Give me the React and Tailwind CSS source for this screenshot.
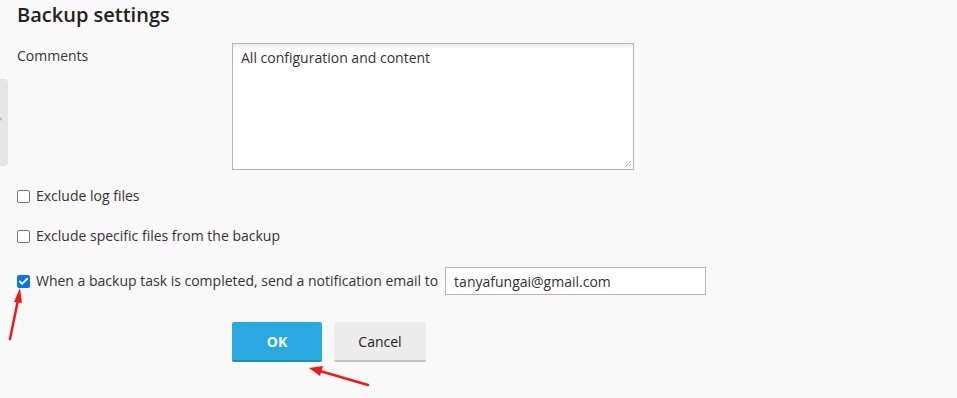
import { Check } from 'lucide-react';

function Box({ checked }) {
    if (checked) {
        return (
            <span className="flex h-[13px] w-[13px] shrink-0 items-center justify-center rounded-[2px] bg-[#0a75e6]">
                <Check className="h-[11px] w-[11px] text-white" strokeWidth={4} />
            </span>
        );
    }
    return <span className="h-[13px] w-[13px] shrink-0 rounded-[2px] border border-[#767676] bg-white" />;
}

export default function App() {
    return (
        <div className="relative h-[398px] w-[957px] overflow-hidden bg-[#f9f9f9] font-['Open_Sans',sans-serif] text-[14px] text-[#333]">
            <div className="absolute left-0 top-[79px] h-[87px] w-[8px] rounded-r-[4px] bg-[#e6e6e6]">
                <span className="absolute left-0 top-[36px] text-[7px] leading-none text-[#555]">‹</span>
            </div>

            <div className="pl-[17px]">
                <h1 className="pt-[1px] text-[20px] font-semibold leading-[28px] text-[#222]">Backup settings</h1>

                <div className="mt-[14px] flex">
                    <div className="w-[215px] pt-[3px] leading-[20px]">Comments</div>
                    <div className="relative h-[127px] w-[402px] border border-[#b5b5b5] bg-white shadow-[inset_0_3px_3px_rgba(0,0,0,0.07)]">
                        <div className="px-[8px] pt-[4px] leading-[20px]">All configuration and content</div>
                        <svg className="absolute bottom-[1px] right-[1px]" width="10" height="10" viewBox="0 0 10 10">
                            <path d="M9 3 L3 9 M9 6 L6 9" stroke="#777" strokeWidth="1" strokeDasharray="1 1" />
                        </svg>
                    </div>
                </div>

                <label className="mt-[16px] flex items-center gap-[6px] leading-[20px]">
                    <Box />
                    <span>Exclude log files</span>
                </label>

                <label className="mt-[20px] flex items-center gap-[6px] leading-[20px]">
                    <Box />
                    <span>Exclude specific files from the backup</span>
                </label>

                <div className="mt-[21px] flex items-center gap-[6px]">
                    <Box checked />
                    <span className="leading-[20px]">When a backup task is completed, send a notification email to</span>
                    <div className="ml-[1px] flex h-[28px] w-[261px] items-center border border-[#b5b5b5] bg-white px-[8px]">
                        tanyafungai@gmail.com
                    </div>
                </div>

                <div className="mt-[27px] flex gap-[12px] pl-[215px]">
                    <button className="h-[40px] w-[90px] rounded-[2px] border-b-2 border-[#1f8dbd] bg-[#29a9df] text-[14px] font-bold text-white">
                        OK
                    </button>
                    <button className="h-[40px] w-[92px] rounded-[2px] border-b-2 border-[#c2c2c2] bg-[#ececec] text-[14px] text-[#222]">
                        Cancel
                    </button>
                </div>
            </div>

            <svg className="absolute left-0 top-0" width="957" height="398" viewBox="0 0 957 398">
                <line x1="10" y1="339" x2="18" y2="300" stroke="#f01818" strokeWidth="2.5" strokeLinecap="round" />
                <polygon points="20,288 14,302 22,303" fill="#f01818" />
                <line x1="368" y1="385" x2="320" y2="371" stroke="#f01818" strokeWidth="2.5" strokeLinecap="round" />
                <polygon points="309,368 323,366 320,376" fill="#f01818" />
            </svg>
        </div>
    );
}
